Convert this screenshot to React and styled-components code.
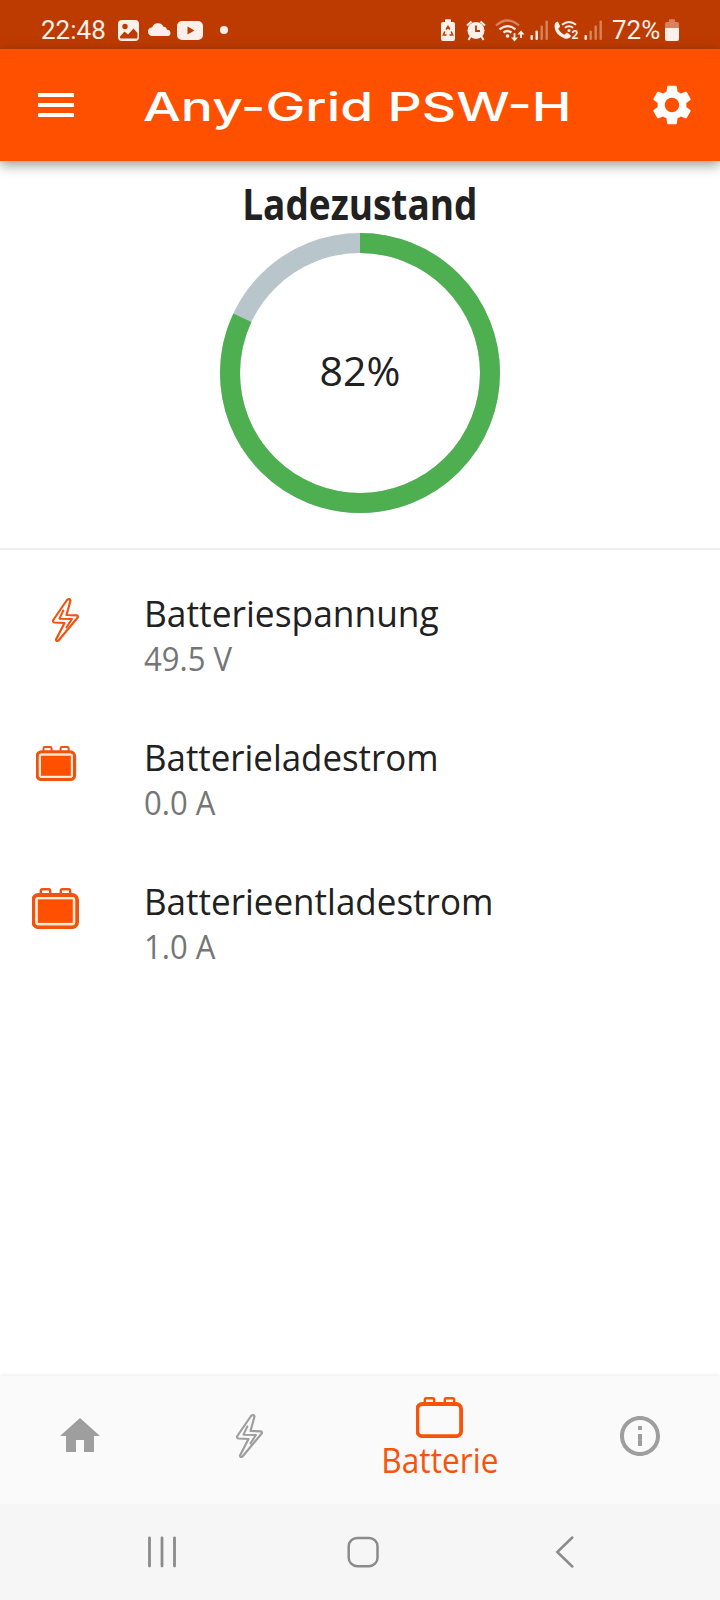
import styled, { createGlobalStyle } from "styled-components"
import { MdHome, MdInfoOutline, MdSettings, MdMenu } from "react-icons/md"

const readings = [
    { title: "Batteriespannung", value: "49.5 V", icon: <BoltIcon />, stretch: 0.955 },
    { title: "Batterieladestrom", value: "0.0 A", icon: <BatteryIcon width={41} filled />, stretch: 0.942 },
    { title: "Batterieentladestrom", value: "1.0 A", icon: <BatteryIcon width={48} filled />, stretch: 0.946 },
]

export default function App() {
    return (
        <Screen>
            <GlobalStyle />
            <StatusBar />
            <AppBar>
                <MenuButton aria-label="Menu"><MdMenu size={48} /></MenuButton>
                <AppTitle>Any-Grid PSW-H</AppTitle>
                <SettingsButton aria-label="Settings"><MdSettings size={48} /></SettingsButton>
            </AppBar>
            <ChargeSection>
                <ChargeTitle>Ladezustand</ChargeTitle>
                <ChargeRing value={82} />
            </ChargeSection>
            <ReadingList>
                {readings.map((item) => (
                    <ReadingRow key={item.title}>
                        <ReadingIcon>{item.icon}</ReadingIcon>
                        <ReadingText>
                            <ReadingTitle $stretch={item.stretch}>{item.title}</ReadingTitle>
                            <ReadingValue>{item.value}</ReadingValue>
                        </ReadingText>
                    </ReadingRow>
                ))}
            </ReadingList>
            <TabBar>
                <Tab><MdHome size={48} /></Tab>
                <Tab><BoltIcon /></Tab>
                <Tab $active>
                    <BatteryIcon width={48} />
                    <TabLabel>Batterie</TabLabel>
                </Tab>
                <Tab><MdInfoOutline size={48} /></Tab>
            </TabBar>
            <SystemNav>
                <svg width="28" height="32" viewBox="0 0 28 32">
                    <path d="M1.5 2v28M14 2v28M26.5 2v28" stroke="#8b8b8b" strokeWidth="2.8" strokeLinecap="round" />
                </svg>
                <svg width="32" height="32" viewBox="0 0 32 32">
                    <rect x="1.7" y="2" width="28.8" height="28.2" rx="8.5" fill="none" stroke="#8b8b8b" strokeWidth="2.5" />
                </svg>
                <svg width="20" height="34" viewBox="0 0 20 34">
                    <path d="M18.3 2.5L3.300 17l15 14.5" fill="none" stroke="#8b8b8b" strokeWidth="2.5" strokeLinecap="round" />
                </svg>
            </SystemNav>
        </Screen>
    )
}

function StatusBar() {
    return (
        <StatusRow>
            <Clock>22:48</Clock>
            <Glyph width="21" viewBox="0 0 21 24">
                <rect y="2" width="21" height="21" rx="4" />
                <circle cx="7" cy="8.5" r="2.7" fill="#bd3b00" />
                <path d="M2 18.5l4.5-5 3.5 3 5.5-6 4 4.5v4.5q0 1-1 1H3q-1 0-1-1z" fill="#bd3b00" />
            </Glyph>
            <Glyph $gap={9} width="23" viewBox="0 0 23 24">
                <path d="M4.5 18a4.4 4.4 0 0 1-.3-8.8A6.2 6.2 0 0 1 15.5 8.8 3.7 3.7 0 0 1 19 11.7 3.2 3.2 0 0 1 20 18z" />
            </Glyph>
            <Glyph $gap={6} width="26" viewBox="0 0 26 24">
                <rect y="3" width="26" height="19" rx="5" />
                <path d="M10.5 8.5v8l7-4z" fill="#bd3b00" />
            </Glyph>
            <Glyph $gap={17} width="8" viewBox="0 0 8 24">
                <circle cx="4" cy="12" r="4" />
            </Glyph>
            <StatusRight>
                <Glyph width="14" viewBox="0 0 14 24">
                    <path d="M4 4V2q0-.8.8-.8h4.4q.8 0 .8.8V4h2q2 0 2 2v15q0 2-2 2H2q-2 0-2-2V6q0-2 2-2z" />
                    <path d="M5.1 11.5L7 8.5l1.9 3M10.200 13.500l1.500 3.500H8.500M5.500 17H2.300l1.500-3.500" fill="none" stroke="#bd3b00" strokeWidth="1.5" />
                </Glyph>
                <Glyph $gap={11} width="20" viewBox="0 0 20 24">
                    <path d="M4.5 18.5L2.5 22M15.5 18.5l2 3.5M1 7.5l4.5-4M19 7.500l-4.500-4" stroke="#fdf0ea" strokeWidth="2" />
                    <circle cx="10" cy="12.5" r="8.5" />
                    <path d="M10 7.5v5.500h4" fill="none" stroke="#bd3b00" strokeWidth="1.8" />
                </Glyph>
                <Glyph $gap={9} width="29" viewBox="0 0 29 24">
                    <g fill="none" stroke="#fdf0ea" strokeWidth="2.2">
                        <path d="M1 7.5Q12.5-2.5 24 7.5" opacity=".4" />
                        <path d="M4.5 11.3q8-6.5 16 0M8.5 14.5q4-3 8 0" />
                        <path d="M19.5 15v6M26 20v-6" strokeWidth="1.8" />
                    </g>
                    <circle cx="12.5" cy="18" r="1.8" />
                    <path d="M16 19.5h7L19.5 23.5zM22.5 16.5h7L26 12.5z" />
                </Glyph>
                <SignalBars level={2} />
                <Glyph $gap={6} width="25" viewBox="0 0 25 24">
                    <path d="M1 5.5q1-2 3-1.7l2 4.2q.3 1-1.7 2.5 1.5 4 6 6.2l2-1.700q.8-.6 1.500-.1l2.700 2.300q.8.900-.1 1.900-2.400 2.700-6.400 1.200Q1.500 16.500.6 9.500.4 7 1 5.500z" />
                    <g fill="none" stroke="#fdf0ea" strokeWidth="1.9">
                        <path d="M8 6.700q7-5.500 14 0M10.800 9.800q4.200-3 8.400 0" />
                    </g>
                    <circle cx="15" cy="12.5" r="1.5" />
                    <text x="17.5" y="21" fontFamily="Roboto, sans-serif" fontSize="12" fontWeight="700">2</text>
                </Glyph>
                <SignalBars level={1} />
                <BatteryPercent>72%</BatteryPercent>
                <Glyph $gap={4} width="14" viewBox="0 0 14 24">
                    <path d="M4 4V2q0-.8.8-.8h4.4q.8 0 .8.8V4h2q2 0 2 2v4H0V6q0-2 2-2z" opacity=".4" />
                    <path d="M0 10h14v11q0 2-2 2H2q-2 0-2-2z" />
                </Glyph>
            </StatusRight>
        </StatusRow>
    )
}

function SignalBars({ level }) {
    const tops = [17, 12.5, 7.5, 2.5]
    return (
        <Glyph $gap={5.5} width="18" viewBox="0 0 18 24">
            {tops.map((top, i) => (
                <rect key={top} x={0.5 + i * 5} y={top} width="2.4" height={22 - top} rx="1" opacity={i < level ? 1 : 0.4} />
            ))}
        </Glyph>
    )
}

function ChargeRing({ value }) {
    return (
        <Ring>
            <svg width="280" height="280" viewBox="0 0 280 280">
                <circle cx="140" cy="140" r="130" fill="none" stroke="#b8c6cc" strokeWidth="20" />
                <circle
                    cx="140" cy="140" r="130" fill="none" stroke="#4eaf51" strokeWidth="20"
                    pathLength="100" strokeDasharray={`${value} 100`} transform="rotate(-90 140 140)"
                />
            </svg>
            <RingValue>{value}%</RingValue>
        </Ring>
    )
}

function BoltIcon() {
    return (
        <svg width="46" height="44" viewBox="-19 0 46 44" fill="none" stroke="currentColor" strokeWidth="2.2" strokeLinejoin="round" strokeLinecap="round">
            <path d="M15 2L1.3 22q-.8 2 1.2 2.500l10 .5L4 41.500q.3 2.300 2.500 1L25.700 19.500q.8-1.700-1-2.200L14.500 17l4-14.500Q17.500 0 15 2z" />
            <path d="M11.3 12.5L7.500 20.700l12.500.2-5.500 8.500" strokeWidth="2" />
        </svg>
    )
}

// the drawing is 47 wide, with one unit of space on its right side
function BatteryIcon({ width, filled }) {
    return (
        <svg width={width} height={width * 41 / 48} viewBox="0.5 0 48 41" fill="none" stroke="currentColor">
            <path d="M9.3 6V2.700q0-1.500 1.500-1.500h6.400q1.500 0 1.500 1.500V6M29.300 6V2.700q0-1.500 1.500-1.500h6.400q1.500 0 1.500 1.500V6" strokeWidth="2.4" />
            <rect x="1.9" y="7" width="43.7" height="32.2" rx="5" strokeWidth="3.8" />
            {filled && <rect x="4.8" y="9.900" width="37.900" height="26.400" rx="2" stroke="#ffe9d2" strokeWidth="1.800" />}
            {filled && <rect x="6.3" y="11.300" width="35" height="23.600" fill="#ff5000" stroke="none" />}
        </svg>
    )
}

const GlobalStyle = createGlobalStyle`
    body{
        margin: 0;
        background: #fff;
        font-family: "Open Sans", "Noto Sans", sans-serif;
    }
    svg{
        display: block;
        flex-shrink: 0;
    }
`

const Screen = styled.div`
    width: 720px;
    height: 1600px;
    display: flex;
    flex-direction: column;
    overflow: hidden;
    color: #212121;
`

const StatusRow = styled.div`
    height: 49px;
    box-sizing: border-box;
    padding: 18px 41px 0 41px;
    display: flex;
    align-items: flex-start;
    background: #bd3b00;
    color: #fdf0ea;
    font-family: Roboto, sans-serif;
    font-size: 26px;
    line-height: 24px;
`

const Clock = styled.span`
    width: 77px;
`

const StatusRight = styled.div`
    margin-left: auto;
    display: flex;
`

const Glyph = styled.svg`
    height: 24px;
    margin-left: ${({ $gap = 0 }) => $gap}px;
    fill: #fdf0ea;
    overflow: visible;
`

const BatteryPercent = styled.span`
    width: 49px;
    margin-left: 10px;
`

const AppBar = styled.header`
    height: 112px;
    flex-shrink: 0;
    padding: 0 24px 0 32px;
    display: flex;
    align-items: center;
    background: #ff5000;
    color: #fff;
    box-shadow: 0 4px 12px rgba(0, 0, 0, 0.4);
    z-index: 1;
`

const BarButton = styled.button`
    padding: 0;
    border: none;
    background: none;
    color: inherit;
`

const MenuButton = styled(BarButton)`
    width: 111px;
`

const SettingsButton = styled(BarButton)`
    margin-left: auto;
`

const AppTitle = styled.h1`
    width: 300px;
    margin: 0;
    padding-top: 4px;
    font-family: Inter, sans-serif;
    font-size: 40px;
    font-weight: 500;
    line-height: 48px;
    white-space: nowrap;
    transform: scaleX(1.335);
    transform-origin: left;
`

const ChargeSection = styled.section`
    height: 389px;
    box-sizing: border-box;
    padding-top: 23px;
    border-bottom: 2px solid #eee;
    display: flex;
    flex-direction: column;
    align-items: center;
    gap: 9px;
`

const ChargeTitle = styled.h2`
    margin: 0;
    font-size: 43px;
    font-weight: 700;
    line-height: 40px;
    transform: scaleX(0.86);
`

const Ring = styled.div`
    display: grid;
    place-items: center;
    > *{
        grid-area: 1 / 1;
    }
`

const RingValue = styled.span`
    padding-bottom: 7px;
    font-size: 41px;
    line-height: 44px;
`

const ReadingList = styled.ul`
    flex: 1;
    margin: 0;
    padding: 14px 0 0;
    list-style: none;
`

const ReadingRow = styled.li`
    height: 144px;
    display: flex;
    align-items: center;
`

const ReadingIcon = styled.div`
    width: 48px;
    padding: 0 64px 32px 32px;
    display: flex;
    justify-content: center;
    color: #f0530f;
`

const ReadingText = styled.div`
    display: flex;
    flex-direction: column;
    align-items: flex-start;
`

const ReadingTitle = styled.span`
    padding-bottom: 2px;
    font-size: 37px;
    line-height: 44px;
    transform: scaleX(${({ $stretch }) => $stretch});
    transform-origin: left;
`

const ReadingValue = styled.span`
    font-size: 32px;
    line-height: 44px;
    color: #757575;
    transform: scaleX(0.97);
    transform-origin: left;
`

const TabBar = styled.nav`
    height: 120px;
    padding-bottom: 8px;
    display: flex;
    background: #fafafa;
    box-shadow: 0 -1px 4px rgba(0, 0, 0, 0.07);
`

const Tab = styled.div`
    width: ${({ $active }) => ($active ? 240 : 160)}px;
    display: flex;
    flex-direction: column;
    align-items: center;
    justify-content: center;
    gap: 3px;
    color: ${({ $active }) => ($active ? "#f9530a" : "#9e9e9e")};
`

const TabLabel = styled.span`
    padding-top: 1px;
    margin-bottom: -2px;
    font-size: 34px;
    line-height: 36px;
    transform: scaleX(0.932);
`

const SystemNav = styled.div`
    height: 96px;
    padding: 0 55px 0 61px;
    display: grid;
    grid-template-columns: repeat(3, 1fr);
    place-items: center;
    background: #f6f6f6;
    position: relative;
`
